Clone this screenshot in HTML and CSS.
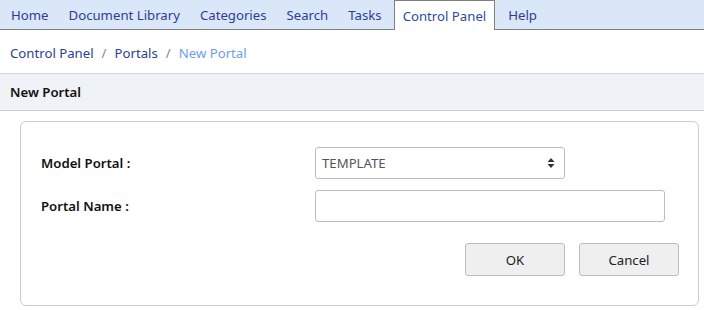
FILE: index.html
```html
<!DOCTYPE html>
<html>
<head>
<meta charset="utf-8">
<link rel="stylesheet" href="styles.css">
</head>
<body>
<nav class="tabs">
  <a class="tab">Home</a>
  <a class="tab">Document Library</a>
  <a class="tab">Categories</a>
  <a class="tab">Search</a>
  <a class="tab">Tasks</a>
  <a class="tab active">Control Panel</a>
  <a class="tab">Help</a>
</nav>
<div class="crumbs">
  <a class="crumb">Control Panel</a><span class="sep">/</span><a class="crumb">Portals</a><span class="sep">/</span><span class="current">New Portal</span>
</div>
<div class="section-head">New Portal</div>
<div class="card">
  <div class="row">
    <label class="label">Model Portal :</label>
    <div class="select">
      <span class="select-text">TEMPLATE</span>
      <svg class="arrows" width="8" height="12" viewBox="0 0 8 12"><path d="M4 1 L7.5 5 L0.5 5 Z M4 11 L7.5 7 L0.5 7 Z" fill="#333"/></svg>
    </div>
  </div>
  <div class="row">
    <label class="label">Portal Name :</label>
    <div class="input"></div>
  </div>
  <div class="buttons">
    <button class="btn">OK</button>
    <button class="btn">Cancel</button>
  </div>
</div>
</body>
</html>
```
FILE: styles.css
```css
* { box-sizing: border-box; }
body {
  margin: 0;
  font-family: "Segoe UI", "Noto Sans", sans-serif;
  font-size: 13.2px;
  color: #222;
  background: #fff;
}
.tabs {
  display: flex;
  height: 30px;
  background: #dae7f8;
  border-bottom: 1px solid #808080;
  padding-left: 1px;
}
.tab {
  padding: 0 10px;
  line-height: 30px;
  color: #2d3e92;
  white-space: nowrap;
}
.active {
  background: #fff;
  border: 1px solid #808080;
  border-bottom: none;
  height: 30px;
  line-height: 30px;
  margin-left: 2px;
  margin-right: 3px;
  color: #2c4aa6;
  padding: 0 8px;
}
.crumbs {
  height: 43px;
  display: flex;
  align-items: center;
  padding-left: 10px;
  padding-top: 2px;
}
.crumb { color: #2d3e92; }
.sep { color: #888; margin: 0 8px; }
.current { color: #6f9ee6; }
.section-head {
  height: 38px;
  background: #eff2f6;
  border-top: 1px solid #d6d6d6;
  border-bottom: 1px solid #cfcfcf;
  padding-left: 10px;
  display: flex;
  align-items: center;
  font-weight: 600;
  color: #111;
}
.card {
  margin: 10px 5px 0 20px;
  height: 185px;
  border: 1px solid #cccccc;
  border-radius: 6px;
  padding: 25px 0 0 20px;
}
.row {
  display: flex;
  align-items: center;
  margin-bottom: 11px;
}
.label {
  width: 274px;
  font-weight: 600;
  color: #111;
}
.select {
  width: 250px;
  height: 32px;
  border: 1px solid #bdbdbd;
  border-radius: 3px;
  display: flex;
  align-items: center;
  justify-content: space-between;
  padding: 0 9px 0 6px;
}
.select-text { color: #555; }
.input {
  width: 350px;
  height: 32px;
  border: 1px solid #bdbdbd;
  border-radius: 3px;
}
.buttons {
  display: flex;
  gap: 14px;
  margin-left: 424px;
  margin-top: 21px;
}
.btn {
  width: 100px;
  height: 33px;
  background: #efefef;
  border: 1px solid #bdbdbd;
  border-radius: 3px;
  font-family: inherit;
  font-size: 13.2px;
  color: #222;
  padding: 0;
}
```
